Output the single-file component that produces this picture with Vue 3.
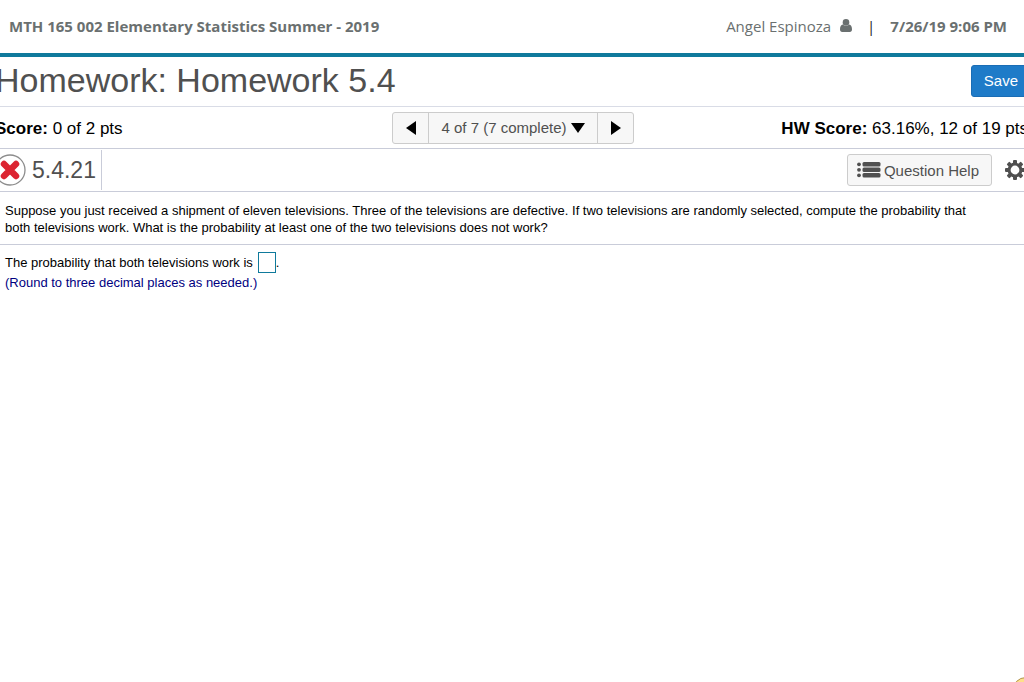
<template>
  <div class="player">
    <header class="course-bar">
      <span class="course-name">{{ course }}</span>
      <div class="user-info">
        <span>{{ user }}</span>
        <svg class="user-icon" viewBox="0 0 12 13" aria-hidden="true">
          <circle cx="6" cy="3.4" r="3.3" />
          <path d="M2.800 5.600C1 6 0 7.600 0 10.300C0 12 .8 13 2.200 13H9.800C11.200 13 12 12 12 10.300C12 7.600 11 6 9.200 5.600C7.500 7.300 4.500 7.300 2.800 5.600Z" />
        </svg>
        <span class="divider">|</span>
        <time class="date">{{ date }}</time>
      </div>
    </header>

    <main class="work">
      <div class="row title-row">
        <h1>Homework: {{ homework }}</h1>
        <button type="button" class="btn-save">Save</button>
      </div>

      <div class="row score-row">
        <p class="score"><b>Score:</b> 0 of 2 pts</p>
        <nav class="pager" aria-label="Questions">
          <button type="button" aria-label="Previous question">
            <svg width="10" height="14" viewBox="0 0 10 14"><path d="M10 0V14L0 7Z" /></svg>
          </button>
          <button type="button" class="pager-menu">
            4 of 7 (7 complete)
            <svg width="14" height="10" viewBox="0 0 14 10"><path d="M0 0H14L7 10Z" /></svg>
          </button>
          <button type="button" aria-label="Next question">
            <svg width="10" height="14" viewBox="0 0 10 14"><path d="M0 0V14L10 7Z" /></svg>
          </button>
        </nav>
        <p class="score hw-score"><b>HW Score:</b> 63.16%, 12 of 19 pts</p>
      </div>

      <div class="row question-row">
        <div class="question-id">
          <svg class="wrong-icon" viewBox="0 0 32 32" aria-label="Incorrect">
            <circle cx="16" cy="16" r="15" fill="#fff" stroke="#8c8c8c" stroke-width="1.300" />
            <path d="M10 10L22 22M22 10L10 22" stroke="#dc2431" stroke-width="6.500" stroke-linecap="round" />
          </svg>
          <h2>5.4.21</h2>
        </div>
        <div class="tools">
          <button type="button" class="btn-help">
            <svg width="24" height="16" viewBox="0 0 24 16" aria-hidden="true">
              <g v-for="y in [0, 5.500, 11]" :key="y">
                <circle cx="2" :cy="y + 2.300" r="1.900" />
                <rect x="5.500" :y="y" width="18" height="4.600" rx="1.500" />
              </g>
            </svg>
            Question Help
          </button>
          <button type="button" class="btn-settings" aria-label="Settings">
            <svg width="20" height="20" viewBox="0 0 20 20">
              <circle cx="10" cy="10" r="5.900" fill="none" stroke="#505050" stroke-width="3" />
              <rect v-for="n in 8" :key="n" x="8" y="0" width="4" height="4" rx="1" :transform="`rotate(${n * 45} 10 10)`" />
            </svg>
          </button>
        </div>
      </div>
    </main>

    <section class="problem">
      <p>
        Suppose you just received a shipment of eleven televisions. Three of the televisions are defective. If two televisions are randomly selected, compute the probability that<br>
        both televisions work. What is the probability at least one of the two televisions does not work?
      </p>
    </section>

    <section class="answer">
      <div class="answer-line">
        <label for="answer">The probability that both televisions work is</label>
        <input id="answer" v-model="answer" type="text">
        <span>.</span>
      </div>
      <p class="hint">(Round to three decimal places as needed.)</p>
    </section>

    <button type="button" class="help-bubble" aria-label="Help"></button>
  </div>
</template>

<script setup>
import { ref } from 'vue'

const course = 'MTH 165 002 Elementary Statistics Summer - 2019'
const user = 'Angel Espinoza'
const date = '7/26/19 9:06 PM'
const homework = 'Homework 5.4'

const answer = ref('')
</script>

<style>
body {
  margin: 0;
  background: #fff;
}
</style>

<style scoped>
.player {
  position: relative;
  min-height: 100vh;
  overflow: hidden;
  font-family: "Liberation Sans", Arial, sans-serif;
  color: #000;
}

h1,
h2,
p {
  margin: 0;
  font-weight: 400;
}

button {
  font-family: inherit;
  font-size: 15px;
  cursor: pointer;
}

.course-bar {
  display: flex;
  justify-content: space-between;
  align-items: center;
  box-sizing: border-box;
  height: 57px;
  padding: 0 17px 2px 9px;
  border-bottom: 4px solid #0f7a9c;
  font-family: "Open Sans", sans-serif;
  font-size: 15px;
  color: #6a7070;
}

.course-name,
.date {
  font-weight: 700;
}

.user-info {
  display: flex;
  align-items: center;
}

.user-icon {
  width: 12px;
  height: 13px;
  margin-left: 9px;
  fill: #6a7070;
}

.divider {
  margin: 0 15px;
  color: #222;
}

/* the work area is a little wider than the window */
.work {
  margin: 0 -7px 0 -5px;
}

.row {
  display: flex;
  justify-content: space-between;
  align-items: center;
  box-sizing: border-box;
  border-bottom: 1px solid #c9ccd9;
}

.title-row {
  height: 50px;
  padding-bottom: 2px;
  border-bottom-color: #d9dce6;
}

h1 {
  padding-bottom: 2px;
  font-size: 34px;
  line-height: 44px;
  color: #505050;
}

.btn-save {
  height: 32px;
  padding: 0 12px;
  border: 1px solid #1a6db5;
  border-radius: 3px;
  background: #1e7bc8;
  color: #fff;
}

.score-row {
  display: grid;
  grid-template-columns: 1fr auto 1fr;
  height: 42px;
}

.score {
  padding-top: 2px;
  font-size: 17px;
  white-space: nowrap;
}

.hw-score {
  padding-right: 3px;
  text-align: right;
}

.pager {
  display: flex;
  border: 1px solid #ccc;
  border-radius: 3px;
  background: #f7f7f7;
}

.pager button {
  display: flex;
  justify-content: center;
  align-items: center;
  gap: 4px;
  width: 35px;
  height: 30px;
  padding: 0;
  border: 0;
  background: none;
  color: #505050;
}

.pager .pager-menu {
  width: 170px;
  border: solid #ccc;
  border-width: 0 1px;
}

.question-row {
  height: 43px;
}

.question-id {
  display: flex;
  align-items: center;
  gap: 6px;
  height: 40px;
  padding-right: 5px;
  border-right: 1px solid #c9ccd9;
}

.wrong-icon {
  width: 32px;
  height: 32px;
  margin-left: -1px;
}

h2 {
  font-size: 23px;
  color: #505050;
}

.tools {
  display: flex;
  align-items: center;
  gap: 13px;
  padding-right: 6px;
}

.btn-help {
  display: flex;
  align-items: center;
  gap: 3px;
  height: 32px;
  padding: 0 12px 0 9px;
  border: 1px solid #ccc;
  border-radius: 3px;
  background: #f7f7f7;
  color: #505050;
}

.btn-help svg,
.btn-settings svg {
  fill: #505050;
}

.btn-settings {
  display: flex;
  padding: 0;
  border: 0;
  background: none;
}

.problem,
.answer {
  font-size: 13px;
  line-height: 17px;
}

.problem {
  padding: 10px 0 8px 5px;
  border-bottom: 1px solid #c9ccd9;
}

.answer {
  padding: 7px 5px;
}

.answer-line {
  display: flex;
  align-items: center;
}

.answer-line input {
  box-sizing: border-box;
  width: 18px;
  height: 21px;
  margin-left: 5px;
  padding: 0;
  border: 1px solid #0f7a9c;
  background: #fff;
}

.hint {
  margin-top: 1px;
  color: #00007f;
}

.help-bubble {
  position: absolute;
  right: -16px;
  bottom: -23px;
  width: 28px;
  height: 28px;
  border: 1px solid #b0904a;
  border-radius: 50%;
  background: #ffe08a;
}
</style>
